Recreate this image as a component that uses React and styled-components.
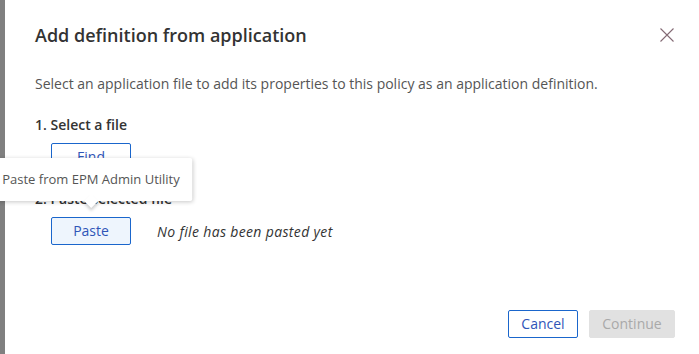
import React from 'react';
import styled, { createGlobalStyle } from 'styled-components';

const GlobalStyle = createGlobalStyle`
  html, body {
    margin: 0;
    padding: 0;
    background: #ffffff;
  }
  body {
    font-family: 'Open Sans', 'Noto Sans', sans-serif;
    color: #333333;
  }
`;

const Page = styled.div`
  display: flex;
  width: 699px;
  height: 354px;
  overflow: hidden;
`;

const Backdrop = styled.div`
  width: 5px;
  flex-shrink: 0;
  background: #808080;
`;

const Dialog = styled.div`
  flex: 1;
  display: flex;
  flex-direction: column;
  padding: 22px 24px 16px 30px;
  background: #ffffff;
`;

const Header = styled.div`
  display: flex;
  align-items: center;
  justify-content: space-between;
`;

const Title = styled.h2`
  margin: 0;
  font-size: 18px;
  line-height: 26px;
  font-weight: 600;
  color: #333333;
`;

const CloseButton = styled.button`
  display: flex;
  padding: 0;
  border: 0;
  background: none;
  color: #846a74;
  cursor: pointer;
`;

const Description = styled.p`
  margin: 26px 0 0;
  font-size: 14px;
  line-height: 20px;
  color: #555555;
`;

const StepLabel = styled.div`
  margin-top: ${(p) => p.$gap}px;
  font-size: 14px;
  line-height: 20px;
  font-weight: 600;
  color: #333333;
`;

const StepRow = styled.div`
  display: flex;
  align-items: center;
  gap: 26px;
  margin: 8px 0 0 16px;
`;

const Anchor = styled.div`
  position: relative;
  display: flex;
`;

const Button = styled.button`
  height: 28px;
  min-width: ${(p) => p.$width || 70}px;
  padding: 0 12px;
  border: 1px solid ${(p) => (p.$disabled ? '#e1e1e1' : '#1a66cc')};
  border-radius: 2px;
  background: ${(p) => (p.$disabled ? '#e1e1e1' : p.$active ? '#eef5fd' : '#ffffff')};
  color: ${(p) => (p.$disabled ? '#a9a9a9' : '#2f55b8')};
  font-family: inherit;
  font-size: 14px;
  line-height: 26px;
  cursor: ${(p) => (p.$disabled ? 'default' : 'pointer')};
`;

const Hint = styled.span`
  font-size: 14px;
  font-style: italic;
  letter-spacing: 0.35px;
  color: #333333;
`;

const Tooltip = styled.div`
  position: absolute;
  left: 50%;
  bottom: calc(100% + 16px);
  transform: translateX(-50%);
  white-space: nowrap;
  padding: 11px 12px 12px;
  background: #ffffff;
  font-size: 13px;
  line-height: 20px;
  color: #555555;
  box-shadow: 0 1px 4px rgba(0, 0, 0, 0.22);
  border-radius: 2px;
  z-index: 2;

  &::after {
    content: '';
    position: absolute;
    left: 50%;
    bottom: -5px;
    width: 10px;
    height: 10px;
    margin-left: -5px;
    background: #ffffff;
    transform: rotate(45deg);
    box-shadow: 2px 2px 3px rgba(0, 0, 0, 0.18);
  }
`;

const Spacer = styled.div`
  flex: 1;
`;

const Footer = styled.div`
  display: flex;
  justify-content: flex-end;
  gap: 11px;
`;

const CloseIcon = () => (
  <svg width="16" height="16" viewBox="0 0 16 16" fill="none">
    <path d="M1.5 1.5 L14.5 14.5 M14.5 1.5 L1.5 14.5" stroke="currentColor" strokeWidth="1.1" />
  </svg>
);

const App = () => (
  <>
    <GlobalStyle />
    <Page>
      <Backdrop />
      <Dialog>
        <Header>
          <Title>Add definition from application</Title>
          <CloseButton aria-label="Close">
            <CloseIcon />
          </CloseButton>
        </Header>
        <Description>
          Select an application file to add its properties to this policy as an application definition.
        </Description>
        <StepLabel $gap={21}>1. Select a file</StepLabel>
        <StepRow>
          <Button $width={80}>Find</Button>
        </StepRow>
        <StepLabel $gap={18}>2. Paste selected file</StepLabel>
        <StepRow>
          <Anchor>
            <Tooltip>Paste from EPM Admin Utility</Tooltip>
            <Button $width={80} $active>
              Paste
            </Button>
          </Anchor>
          <Hint>No file has been pasted yet</Hint>
        </StepRow>
        <Spacer />
        <Footer>
          <Button>Cancel</Button>
          <Button $width={86} $disabled>
            Continue
          </Button>
        </Footer>
      </Dialog>
    </Page>
  </>
);

export default App;
